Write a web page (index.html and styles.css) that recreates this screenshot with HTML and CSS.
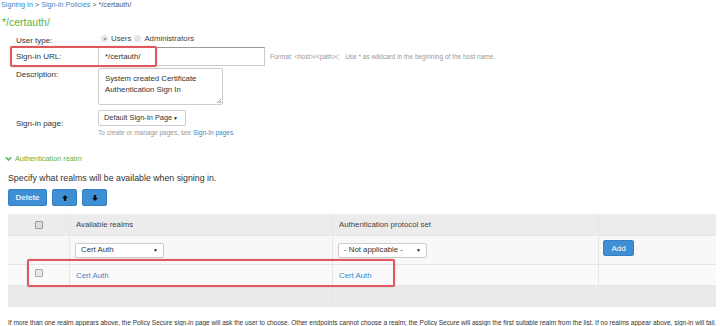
FILE: index.html
```html
<!DOCTYPE html>
<html>
<head>
<meta charset="utf-8">
<link rel="stylesheet" href="styles.css">
</head>
<body>
<div class="crumbs"><a>Signing In</a> &gt; <a>Sign-in Policies</a> &gt; */certauth/</div>
<h1 class="title">*/certauth/</h1>
<div class="form">
  <div class="row r-type">
    <div class="lbl">User type:</div>
    <div class="val radios">
      <span class="radio on"></span><span class="rtxt">Users</span>
      <span class="radio"></span><span class="rtxt">Administrators</span>
    </div>
  </div>
  <div class="row r-url">
    <div class="lbl">Sign-in URL:</div>
    <div class="val"><div class="input url">*/certauth/</div><span class="hint">Format: &lt;host&gt;/&lt;path&gt;/;&nbsp;&nbsp; Use * as wildcard in the beginning of the host name.</span></div>
    <div class="hl hl-url"></div>
  </div>
  <div class="row r-desc">
    <div class="lbl">Description:</div>
    <div class="val"><div class="textarea">System created Certificate Authentication Sign In<span class="grip"></span></div></div>
  </div>
  <div class="row r-page">
    <div class="lbl">Sign-in page:</div>
    <div class="val col">
      <div class="select sp">Default Sign-In Page <span class="caret">▼</span></div>
      <div class="help">To create or manage pages, see <a>Sign-In pages</a>.</div>
    </div>
  </div>
</div>
<div class="section"><svg class="chev" width="7" height="6" viewBox="0 0 7 6"><path d="M0.8 1.2 L3.5 4 L6.2 1.2" fill="none" stroke="#5cb85c" stroke-width="1.6"/></svg>Authentication realm</div>
<p class="spec">Specify what realms will be available when signing in.</p>
<div class="btns">
  <span class="btn del">Delete</span>
  <span class="btn arr"><svg width="6" height="6" viewBox="0 0 6 6"><path d="M3 0 L6 3 L4.2 3 L4.2 6 L1.8 6 L1.8 3 L0 3 Z" fill="#111"/></svg></span>
  <span class="btn arr"><svg width="6" height="6" viewBox="0 0 6 6"><path d="M3 6 L6 3 L4.2 3 L4.2 0 L1.8 0 L1.8 3 L0 3 Z" fill="#111"/></svg></span>
</div>
<div class="tablewrap">
<table class="realms">
  <tr class="head">
    <td class="c1"><span class="hcb"></span></td>
    <td class="c2">Available realms</td>
    <td class="c3">Authentication protocol set</td>
    <td class="c4"></td>
  </tr>
  <tr class="addrow">
    <td></td>
    <td><div class="select s1">Cert Auth <span class="caret">▼</span></div></td>
    <td><div class="select s2">- Not applicable - <span class="caret">▼</span></div></td>
    <td class="c4"><span class="btn add">Add</span></td>
  </tr>
  <tr class="item">
    <td class="c1"><span class="cb"></span></td>
    <td><a>Cert Auth</a></td>
    <td><a>Cert Auth</a></td>
    <td></td>
  </tr>
  <tr class="foot"><td></td><td></td><td></td><td></td></tr>
</table>
<div class="hl hl-row"></div>
</div>
<p class="note">If more than one realm appears above, the Policy Secure sign-in page will ask the user to choose. Other endpoints cannot choose a realm; the Policy Secure will assign the first suitable realm from the list. If no realms appear above, sign-in will fail.</p>
</body>
</html>
```
FILE: styles.css
```css
body {
  margin: 0;
  font-family: "Liberation Sans", Arial, sans-serif;
  color: #333;
  background: #fff;
  width: 720px;
  overflow: hidden;
}
a { color: #3a87c8; }
.crumbs {
  font-size: 7.2px;
  color: #555;
  padding: 0 0 0 1px;
  line-height: 10px;
  margin-top: 0;
}
.title {
  font-size: 10.5px;
  font-weight: normal;
  color: #5bb346;
  margin: 5px 0 0 2px;
  line-height: 15px;
}
.form { margin-top: 1px; }
.row {
  display: flex;
  position: relative;
  font-size: 8px;
}
.lbl {
  width: 82px;
  padding-left: 16px;
  color: #333;
}
.val { display: flex; align-items: center; }
.val.col { flex-direction: column; align-items: flex-start; }
.r-type { height: 14px; align-items: center; }
.r-type .lbl { padding-top: 4px; }
.radios { padding-left: 3px; padding-top: 1px; }
.radio {
  width: 7px; height: 7px;
  border-radius: 50%;
  background: #e6e6e6;
  border: 1px solid #e0e0e0;
  box-sizing: border-box;
  display: inline-block;
  position: relative;
}
.radio.on::after {
  content: "";
  position: absolute;
  left: 1.5px; top: 1.5px;
  width: 2px; height: 2px;
  border-radius: 50%;
  background: #888;
}
.rtxt { margin: 0 3px 0 3px; color: #444; font-size: 7.8px; }
.r-url { margin-top: 2px; height: 19px; align-items: center; }
.input, .textarea, .select {
  border: 1px solid #ccc;
  box-sizing: border-box;
  background: #fff;
  color: #333;
  font-size: 7.8px;
}
.input.url {
  width: 167px; height: 19px;
  padding: 3px 6px;
  border-top-color: #999;
  line-height: 11px;
}
.hint { font-size: 6.5px; color: #999; margin-left: 5px; }
.hl {
  position: absolute;
  border: 2px solid #e0575c;
  border-radius: 2px;
  box-shadow: 0 0 2px rgba(0,0,0,0.2);
  pointer-events: none;
}
.hl-url { left: 10px; top: -1px; width: 147px; height: 21px; box-sizing: border-box; }
.r-desc { margin-top: 2px; }
.r-desc .lbl { padding-top: 2px; }
.textarea {
  width: 125px; height: 37px;
  padding: 4px 6px;
  line-height: 11px;
  border-radius: 2px;
  position: relative;
}
.grip {
  position: absolute; right: 1px; bottom: 1px;
  width: 4px; height: 4px;
  background: linear-gradient(135deg, transparent 45%, #aaa 45%, #aaa 55%, transparent 55%, transparent 75%, #aaa 75%);
}
.r-page { margin-top: 5px; }
.r-page .lbl { padding-top: 9px; }
.select {
  height: 16px;
  border-radius: 2px;
  padding: 0 5px;
  line-height: 14px;
  display: flex;
  justify-content: space-between;
  align-items: center;
  white-space: nowrap;
}
.sp { width: 88px; padding: 0 7px 0 5px; font-size: 7.4px; }
.caret { font-size: 5px; color: #222; }
.help { font-size: 6.5px; color: #999; margin-top: 3px; }
.help a { color: #3a87c8; }
.section {
  margin-top: 18px;
  padding-left: 5px;
  font-size: 7.3px;
  color: #5bb346;
  display: flex;
  align-items: center;
  line-height: 10px;
}
.chev { margin-right: 3px; }
.spec {
  margin: 9px 0 0 8px;
  font-size: 8.8px;
  color: #333;
  line-height: 11px;
}
.btns {
  margin: 5px 0 0 8px;
  display: flex;
  gap: 5px;
}
.btn {
  background: #3e8fd3;
  border: 1px solid #3580c2;
  border-radius: 2px;
  color: #fff;
  font-size: 8px;
  display: inline-flex;
  align-items: center;
  justify-content: center;
  height: 17px;
  box-sizing: border-box;
}
.del { width: 39px; font-weight: bold; color: #e6f0fa; }
.arr { width: 25px; }
.tablewrap {
  position: relative;
  margin: 8px 4px 0 8px;
}
.realms {
  width: 100%;
  border-collapse: collapse;
  font-size: 7.8px;
}
.realms td {
  border: 1px solid #e6e6e6;
  padding: 0 6px;
  color: #444;
}
.realms td:first-child { border-left: none; }
.realms td:last-child { border-right: none; }
.realms tr:first-child td { border-top: none; }
.realms tr:last-child td { border-bottom: none; }
.realms td.c4 { padding-left: 4px; }
.c1 { width: 49px; text-align: center; }
.c2 { width: 250px; }
.c3 { width: 253px; }
.head td { background: #ececec; height: 21px; }
.addrow td { background: #f8f8f8; height: 28px; }
.item td { background: #fafafa; height: 20px; }
.foot td { background: #eaeaea; height: 21px; }
.hcb, .cb {
  display: inline-block;
  width: 6px; height: 6px;
  border: 1px solid #aaa;
  border-radius: 1px;
  background: #e8e8e8;
  vertical-align: middle;
}
.hcb { background: #ddd; border-color: #999; }
.cb { margin-left: 0; position: relative; top: -2px; }
.s1 { width: 89px; height: 15px; margin-left: -1px; }
.s2 { width: 89px; height: 15px; margin-left: -1px; }
.add { width: 31px; height: 16px; font-size: 8px; position: relative; top: -2px; }
.hl-row { left: 19px; top: 45px; width: 368px; height: 28px; box-sizing: border-box; }
.note {
  margin: 12px 0 0 8px;
  font-size: 6.5px;
  color: #333;
  white-space: nowrap;
}
```
